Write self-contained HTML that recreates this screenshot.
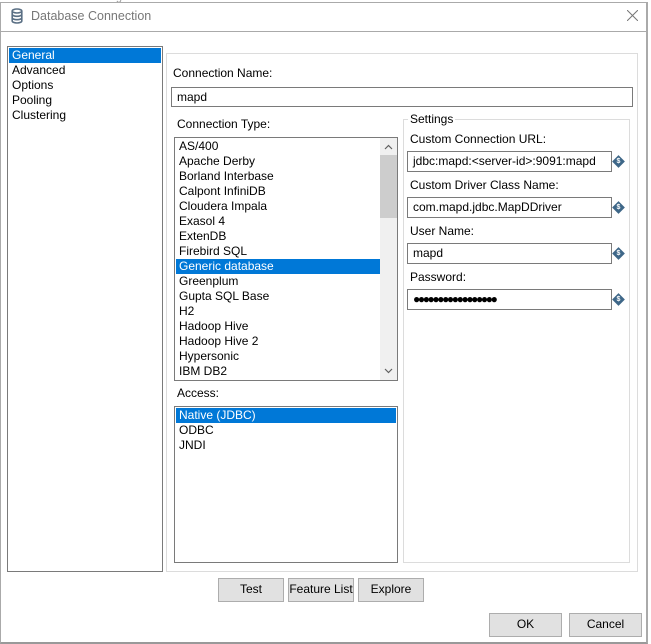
<!DOCTYPE html>
<html><head><meta charset="utf-8"><style>
*{box-sizing:border-box}
body{margin:0;width:651px;height:644px;background:#fff;position:relative;overflow:hidden;font-family:"Liberation Sans",sans-serif;font-size:12px;color:#000}
.a{position:absolute}
.t{position:absolute;white-space:nowrap;line-height:15px}
.box{position:absolute;border:1px solid #7a7a7a;background:#fff}
.inp{position:absolute;border:1px solid #7a7a7a;background:#fff;padding-left:5px;line-height:19px;white-space:nowrap}
.row{height:15px;line-height:15px;padding-left:3px;white-space:nowrap}
.sel{background:#0078d7;color:#fff}
.btn{position:absolute;border:1px solid #adadad;background:#e1e1e1;text-align:center;line-height:21px}
.ic{position:absolute;width:9px;height:9px;background:#3e6788;transform:rotate(45deg);}
.ic span{display:block;transform:rotate(-45deg);color:#fff;font-size:7px;line-height:9px;text-align:center;font-weight:bold}
</style></head><body>
<div class="t" style="left:40px;top:-9px;color:#999;font-size:11px;line-height:12px">Product Running on Canet Canet on Jul 13 2018</div>
<div class="a" style="left:0;top:2px;width:648px;height:642px;border:1px solid #aaa;border-right:2px solid #aaa;border-bottom:2px solid #999"></div>
<div class="a" style="left:0;top:31px;width:648px;height:1px;background:#aaa"></div>
<svg class="a" style="left:11px;top:8px" width="12" height="16" viewBox="0 0 12 16"><g fill="none" stroke="#5a6f84" stroke-width="1.6"><ellipse cx="6" cy="3" rx="4.8" ry="2"/><path d="M1.2 3v10c0 1.1 2.2 2 4.8 2s4.8-.9 4.8-2V3M1.2 6.3c0 1.1 2.2 2 4.8 2s4.8-.9 4.8-2M1.2 9.7c0 1.1 2.2 2 4.8 2s4.8-.9 4.8-2"/></g></svg>
<div class="t" style="left:31px;top:9px;color:#777;font-size:12.5px">Database Connection</div>
<svg class="a" style="left:627px;top:10px" width="11" height="11"><path d="M0 0L11 11M11 0L0 11" stroke="#777" stroke-width="1"/></svg>

<div class="box" style="left:7px;top:46px;width:156px;height:526px;padding:1px">
<div class="row sel">General</div><div class="row">Advanced</div><div class="row">Options</div><div class="row">Pooling</div><div class="row">Clustering</div>
</div>
<div class="a" style="left:166px;top:53px;width:472px;height:519px;border:1px solid #dcdcdc"></div>
<div class="t" style="left:173px;top:66px">Connection Name:</div>
<div class="inp" style="left:171px;top:87px;width:462px;height:20px">mapd</div>
<div class="t" style="left:177px;top:117px">Connection Type:</div>
<div class="box" style="left:174px;top:137px;width:224px;height:244px;padding:1px;overflow:hidden">
<div class="row">AS/400</div><div class="row">Apache Derby</div><div class="row">Borland Interbase</div><div class="row">Calpont InfiniDB</div><div class="row">Cloudera Impala</div><div class="row">Exasol 4</div><div class="row">ExtenDB</div><div class="row">Firebird SQL</div><div class="row sel" style="width:204px">Generic database</div><div class="row">Greenplum</div><div class="row">Gupta SQL Base</div><div class="row">H2</div><div class="row">Hadoop Hive</div><div class="row">Hadoop Hive 2</div><div class="row">Hypersonic</div><div class="row">IBM DB2</div>
<div class="a" style="left:205px;top:0;width:17px;height:242px;background:#f0f0f0"></div>
<div class="a" style="left:205px;top:17px;width:17px;height:63px;background:#cdcdcd"></div>
<svg class="a" style="left:209px;top:6px" width="9" height="6"><path d="M1 5L4.5 1.5L8 5" fill="none" stroke="#606060" stroke-width="1.2"/></svg>
<svg class="a" style="left:209px;top:230px" width="9" height="6"><path d="M1 1L4.5 4.5L8 1" fill="none" stroke="#606060" stroke-width="1.2"/></svg>
</div>
<div class="t" style="left:177px;top:386px">Access:</div>
<div class="box" style="left:174px;top:406px;width:224px;height:157px;padding:1px">
<div class="row sel">Native (JDBC)</div><div class="row">ODBC</div><div class="row">JNDI</div>
</div>
<div class="a" style="left:403px;top:119px;width:227px;height:444px;border:1px solid #dcdcdc"></div>
<div class="t" style="left:408px;top:112px;background:#fff;padding:0 2px">Settings</div>
<div class="t" style="left:410px;top:132px">Custom Connection URL:</div>
<div class="inp" style="left:407px;top:151px;width:205px;height:21px">jdbc:mapd:&lt;server-id&gt;:9091:mapd</div>
<div class="t" style="left:410px;top:178px">Custom Driver Class Name:</div>
<div class="inp" style="left:407px;top:197px;width:205px;height:21px">com.mapd.jdbc.MapDDriver</div>
<div class="t" style="left:410px;top:224px">User Name:</div>
<div class="inp" style="left:407px;top:243px;width:205px;height:21px">mapd</div>
<div class="t" style="left:410px;top:270px">Password:</div>
<div class="inp" style="left:407px;top:289px;width:205px;height:21px;font-size:12px;letter-spacing:-2.4px">●●●●●●●●●●●●●●●●●</div>
<div class="ic" style="left:614px;top:157px"><span>$</span></div>
<div class="ic" style="left:614px;top:203px"><span>$</span></div>
<div class="ic" style="left:614px;top:249px"><span>$</span></div>
<div class="ic" style="left:614px;top:295px"><span>$</span></div>

<div class="btn" style="left:218px;top:578px;width:66px;height:24px">Test</div>
<div class="btn" style="left:288px;top:578px;width:66px;height:24px">Feature List</div>
<div class="btn" style="left:358px;top:578px;width:66px;height:24px">Explore</div>
<div class="btn" style="left:489px;top:613px;width:73px;height:24px">OK</div>
<div class="btn" style="left:569px;top:613px;width:73px;height:24px">Cancel</div>
</body></html>
